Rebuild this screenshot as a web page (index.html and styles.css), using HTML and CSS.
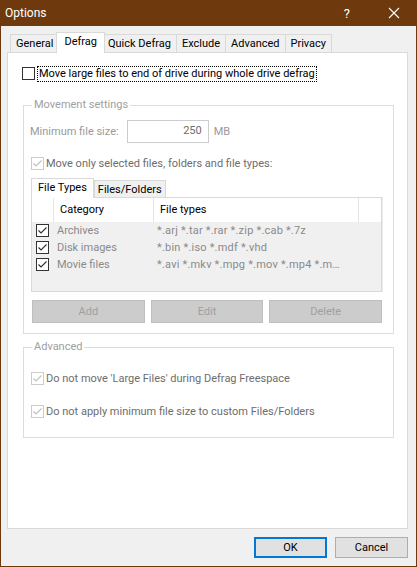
FILE: index.html
```html
<!DOCTYPE html>
<html lang="en">
<head>
    <meta charset="UTF-8">
    <title>Options</title>
    <link rel="stylesheet" href="styles.css">
</head>
<body>

<div class="window">
    <div class="titlebar">
        <span class="title">Options</span>
        <span class="help">?</span>
        <svg class="close" width="12" height="12" viewBox="0 0 12 12">
            <path d="M1 1 L11 11 M11 1 L1 11" stroke="#fff" stroke-width="1.1" fill="none"/>
        </svg>
    </div>

    <div class="content">
        <div class="tabs">
            <div class="tab">General</div>
            <div class="tab active">Defrag</div>
            <div class="tab">Quick Defrag</div>
            <div class="tab">Exclude</div>
            <div class="tab">Advanced</div>
            <div class="tab">Privacy</div>
        </div>

        <div class="panel">
            <label class="check top-check">
                <span class="box"></span>
                <span class="focus">Move large files to end of drive during whole drive defrag</span>
            </label>

            <fieldset class="group movement">
                <legend>Movement settings</legend>

                <div class="size-row">
                    <span class="dim">Minimum file size:</span>
                    <span class="input">250</span>
                    <span class="dim">MB</span>
                </div>

                <label class="check disabled only-check">
                    <span class="box checked">
                        <svg width="11" height="11" viewBox="0 0 11 11"><path d="M1.5 5.5 L4 8 L9.5 2.5" stroke="#c2c2c2" stroke-width="1.2" fill="none"/></svg>
                    </span>
                    <span>Move only selected files, folders and file types:</span>
                </label>

                <div class="subtabs">
                    <div class="subtab active">File Types</div>
                    <div class="subtab">Files/Folders</div>
                </div>

                <div class="listview">
                    <div class="lv-header">
                        <div class="col-check"></div>
                        <div class="col-cat">Category</div>
                        <div class="col-types">File types</div>
                        <div class="col-rest"></div>
                    </div>
                    <div class="lv-row">
                        <span class="box dark"><svg width="11" height="11" viewBox="0 0 11 11"><path d="M1.5 5.5 L4 8 L9.5 2.5" stroke="#333" stroke-width="1.2" fill="none"/></svg></span>
                        <span class="cell-cat">Archives</span>
                        <span class="cell-types">*.arj *.tar *.rar *.zip *.cab *.7z</span>
                    </div>
                    <div class="lv-row">
                        <span class="box dark"><svg width="11" height="11" viewBox="0 0 11 11"><path d="M1.5 5.5 L4 8 L9.5 2.5" stroke="#333" stroke-width="1.2" fill="none"/></svg></span>
                        <span class="cell-cat">Disk images</span>
                        <span class="cell-types">*.bin *.iso *.mdf *.vhd</span>
                    </div>
                    <div class="lv-row">
                        <span class="box dark"><svg width="11" height="11" viewBox="0 0 11 11"><path d="M1.5 5.5 L4 8 L9.5 2.5" stroke="#333" stroke-width="1.2" fill="none"/></svg></span>
                        <span class="cell-cat">Movie files</span>
                        <span class="cell-types">*.avi *.mkv *.mpg *.mov *.mp4 *.m…</span>
                    </div>
                </div>

                <div class="buttons">
                    <button class="btn-disabled">Add</button>
                    <button class="btn-disabled">Edit</button>
                    <button class="btn-disabled">Delete</button>
                </div>
            </fieldset>

            <fieldset class="group advanced">
                <legend>Advanced</legend>
                <label class="check disabled adv-check">
                    <span class="box checked">
                        <svg width="11" height="11" viewBox="0 0 11 11"><path d="M1.5 5.5 L4 8 L9.5 2.5" stroke="#c2c2c2" stroke-width="1.2" fill="none"/></svg>
                    </span>
                    <span>Do not move 'Large Files' during Defrag Freespace</span>
                </label>
                <label class="check disabled adv-check second">
                    <span class="box checked">
                        <svg width="11" height="11" viewBox="0 0 11 11"><path d="M1.5 5.5 L4 8 L9.5 2.5" stroke="#c2c2c2" stroke-width="1.2" fill="none"/></svg>
                    </span>
                    <span>Do not apply minimum file size to custom Files/Folders</span>
                </label>
            </fieldset>
        </div>

        <div class="footer">
            <button class="btn default">OK</button>
            <button class="btn">Cancel</button>
        </div>
    </div>
</div>

</body>
</html>
```

FILE: styles.css
```css
body {
    margin: 0;
    padding: 0;
    font-family: Roboto, "Liberation Sans", sans-serif;
    font-size: 11px;
    color: #000;
    background-color: #f0f0f0;
}

.window {
    width: 417px;
    height: 567px;
    box-sizing: border-box;
    border: 1px solid #6e3a0d;
    border-top: none;
    background-color: #f0f0f0;
    display: flex;
    flex-direction: column;
}

.titlebar {
    height: 26px;
    margin: 0 -1px;
    background-color: #6e3a0d;
    color: #fff;
    display: flex;
    align-items: center;
    padding-left: 5px;
    font-size: 12px;
}

.title {
    flex: 1;
}

.help {
    margin-right: 38px;
    font-size: 13px;
}

.close {
    margin-right: 17px;
}

.content {
    padding: 0 8px 0 6px;
    flex: 1;
    display: flex;
    flex-direction: column;
}

/* main tabs */
.tabs {
    display: flex;
    align-items: flex-end;
    height: 26px;
    padding-left: 4px;
}

.tab {
    height: 17px;
    line-height: 18px;
    padding: 0 5px;
    border: 1px solid #d9d9d9;
    border-bottom: none;
    margin-left: -1px;
    background-color: #f0f0f0;
    white-space: nowrap;
}

.tab.active {
    height: 20px;
    line-height: 18px;
    background-color: #fff;
    margin: 0 -2px -1px -3px;
    padding: 0 7px;
    position: relative;
    z-index: 1;
}

.panel {
    background-color: #fff;
    border: 1px solid #d9d9d9;
    height: 477px;
    box-sizing: border-box;
    padding: 13px 13px 0 14px;
}

/* checkboxes */
.check {
    display: flex;
    align-items: center;
    height: 15px;
    white-space: nowrap;
}

.box {
    width: 13px;
    height: 13px;
    box-sizing: border-box;
    border: 1px solid #333;
    background-color: #fff;
    margin-right: 2px;
    display: flex;
    align-items: center;
    justify-content: center;
    flex-shrink: 0;
}

.check.disabled {
    color: #6d6d6d;
}

.check.disabled .box {
    border-color: #cccccc;
}

.focus {
    outline: 1px dotted #000;
    padding: 0 1px;
    margin-left: 1px;
    line-height: 14px;
}

/* group boxes */
.group {
    border: 1px solid #dcdcdc;
    margin: 0 0 0 1px;
    padding: 0 11px 10px 6px;
}

.group legend {
    color: #a0a0a0;
    padding: 0 2px;
    margin-left: 2px;
    line-height: 14px;
}

.movement {
    margin-top: 17px;
}

.size-row {
    display: flex;
    align-items: center;
    margin-top: 8px;
    height: 23px;
}

.dim {
    color: #9a9a9a;
}

.input {
    width: 82px;
    height: 23px;
    box-sizing: border-box;
    border: 1px solid #cccccc;
    margin: 0 5px 0 8px;
    text-align: right;
    padding-right: 6px;
    line-height: 20px;
    color: #6d6d6d;
}

.only-check {
    margin-top: 13px;
    margin-left: 1px;
}

/* inner tabs */
.subtabs {
    display: flex;
    align-items: flex-end;
    height: 19px;
    margin-top: 7px;
    padding-left: 1px;
}

.subtab {
    height: 16px;
    line-height: 17px;
    padding: 0 3px;
    border: 1px solid #d9d9d9;
    border-bottom: none;
    background-color: #f0f0f0;
}

.subtab.active {
    height: 19px;
    line-height: 18px;
    background-color: #fff;
    padding: 0 6px;
    margin-bottom: -1px;
    position: relative;
    z-index: 1;
}

.listview {
    margin-left: 1px;
    height: 95px;
    box-sizing: border-box;
    border: 1px solid #d9d9d9;
    background-color: #f0f0f0;
    box-shadow: 1px 0 0 #ececec;
}

.lv-header {
    display: flex;
    height: 24px;
    background-color: #fff;
}

.lv-header div {
    line-height: 24px;
    border-right: 1px solid #e5e5e5;
    box-sizing: border-box;
    padding-left: 6px;
}

.col-check {
    width: 22px;
}

.col-cat {
    width: 100px;
}

.col-types {
    width: 205px;
}

.col-rest {
    flex: 1;
    border-right: none !important;
}

.lv-row {
    display: flex;
    align-items: center;
    height: 17px;
    color: #8a8a8a;
}

.lv-row:first-of-type {
    margin-top: 1px;
}

.lv-row .box {
    margin-left: 4px;
}

.cell-cat {
    width: 100px;
    margin-left: 6px;
}

.cell-types {
    white-space: nowrap;
    letter-spacing: 0.2px;
}

.buttons {
    display: grid;
    grid-template-columns: 1fr 1fr 1fr;
    gap: 6px;
    margin-top: 8px;
    padding: 0 0 0 2px;
}

.btn-disabled {
    height: 23px;
    background-color: #cccccc;
    border: 1px solid #bfbfbf;
    color: #a0a0a0;
    font-family: inherit;
    font-size: 11px;
    padding: 0;
}

.advanced {
    margin-top: 6px;
    padding-bottom: 18px;
}

.adv-check {
    margin-top: 17px;
    margin-left: 1px;
}

.adv-check.second {
    margin-top: 18px;
}

/* footer */
.footer {
    display: flex;
    justify-content: flex-end;
    gap: 8px;
    margin-top: 8px;
}

.btn {
    width: 73px;
    height: 21px;
    background-color: #e1e1e1;
    border: 1px solid #adadad;
    font-family: inherit;
    font-size: 11px;
    padding: 0;
}

.btn.default {
    border: 2px solid #0078d7;
}
```
